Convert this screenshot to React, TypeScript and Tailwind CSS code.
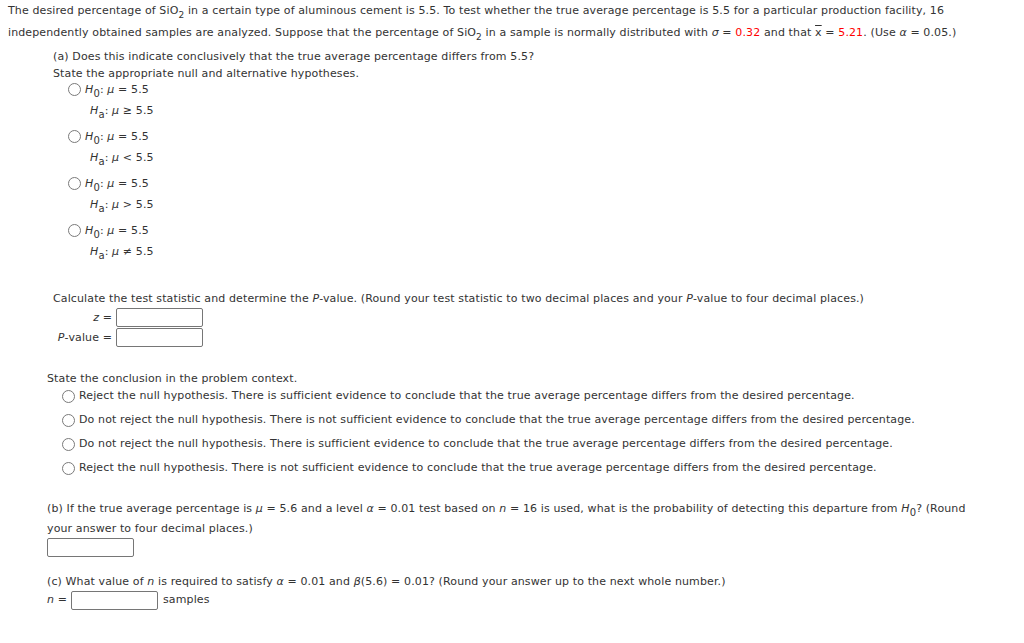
import React from 'react';

function Radio() {
  return <span className="inline-block w-[13px] h-[13px] rounded-full border border-[#7a7a7a] bg-white shrink-0" />;
}

function Box() {
  return <span className="block w-[87px] h-[19px] border border-[#767676] rounded-[2px] bg-white shrink-0" />;
}

const H = ({ s }: { s: string }) => (
  <span>
    <i>H</i>
    <span className="text-[10px] relative top-[4px]">{s}</span>
  </span>
);

function Hyp({ op }: { op: string }) {
  return (
    <div className="flex flex-col">
      <div className="flex items-center gap-[3px] h-[21px]">
        <Radio />
        <span className="ml-[1px]">
          <H s="0" />: <i>μ</i> = 5.5
        </span>
      </div>
      <div className="pl-[22px] h-[21px] flex items-center">
        <span>
          <H s="a" />: <i>μ</i> {op} 5.5
        </span>
      </div>
    </div>
  );
}

const conclusions = [
  'Reject the null hypothesis. There is sufficient evidence to conclude that the true average percentage differs from the desired percentage.',
  'Do not reject the null hypothesis. There is not sufficient evidence to conclude that the true average percentage differs from the desired percentage.',
  'Do not reject the null hypothesis. There is sufficient evidence to conclude that the true average percentage differs from the desired percentage.',
  'Reject the null hypothesis. There is not sufficient evidence to conclude that the true average percentage differs from the desired percentage.',
];

export default function App() {
  return (
    <div className="min-h-[643px] bg-white text-[#333] text-[11px] tracking-[0.12px] leading-[22px] px-2 font-['DejaVu_Sans',Verdana,sans-serif]">
      <p className="pr-[16px]">
        The desired percentage of SiO<span className="text-[9px] relative top-[4px]">2</span> in a certain type of aluminous cement is 5.5. To test whether the true average percentage is 5.5 for a particular production facility, 16 independently obtained samples are analyzed. Suppose that the percentage of SiO<span className="text-[9px] relative top-[4px]">2</span> in a sample is normally distributed with <i>σ</i> = <span className="text-[#f00]">0.32</span> and that <span className="overline">x</span> = <span className="text-[#f00]">5.21</span>. (Use <i>α</i> = 0.05.)
      </p>

      <div className="ml-[45px] mt-[4px] leading-[17px]">
        <p>(a) Does this indicate conclusively that the true average percentage differs from 5.5?</p>
        <p>State the appropriate null and alternative hypotheses.</p>
        <div className="ml-[15px] -mt-[3px] flex flex-col gap-[5px]">
          <Hyp op="≥" />
          <Hyp op="<" />
          <Hyp op=">" />
          <Hyp op="≠" />
        </div>

        <p className="mt-[28px]">Calculate the test statistic and determine the <i>P</i>-value. (Round your test statistic to two decimal places and your <i>P</i>-value to four decimal places.)</p>
        <div className="grid grid-cols-[63px_auto] gap-y-[1px] items-center justify-start mt-[1px]">
          <span className="text-right pr-[4px]"><i>z</i> =</span>
          <Box />
          <span className="text-right pr-[4px]"><i>P</i>-value =</span>
          <Box />
        </div>
      </div>

      <div className="ml-[39px] mt-[23px] pr-[40px]">
        <p className="leading-[17px]">State the conclusion in the problem context.</p>
        <div className="ml-[15px] -mt-[3px] flex flex-col">
          {conclusions.map((c) => (
            <div key={c} className="flex items-center gap-[4px] h-[24px]">
              <Radio />
              <span>{c}</span>
            </div>
          ))}
        </div>

        <p className="mt-[19px] leading-[20px]">
          (b) If the true average percentage is <i>μ</i> = 5.6 and a level <i>α</i> = 0.01 test based on <i>n</i> = 16 is used, what is the probability of detecting this departure from <H s="0" />? (Round your answer to four decimal places.)
        </p>
        <div className="mt-[-1px] flex">
          <Box />
        </div>

        <p className="mt-[16px] leading-[17px]">
          (c) What value of <i>n</i> is required to satisfy <i>α</i> = 0.01 and <i>β</i>(5.6) = 0.01? (Round your answer up to the next whole number.)
        </p>
        <div className="flex items-center -mt-[1px]">
          <span className="w-[24px] shrink-0 whitespace-nowrap"><i>n</i> =</span>
          <Box />
          <span className="ml-[5px]">samples</span>
        </div>
      </div>
    </div>
  );
}
